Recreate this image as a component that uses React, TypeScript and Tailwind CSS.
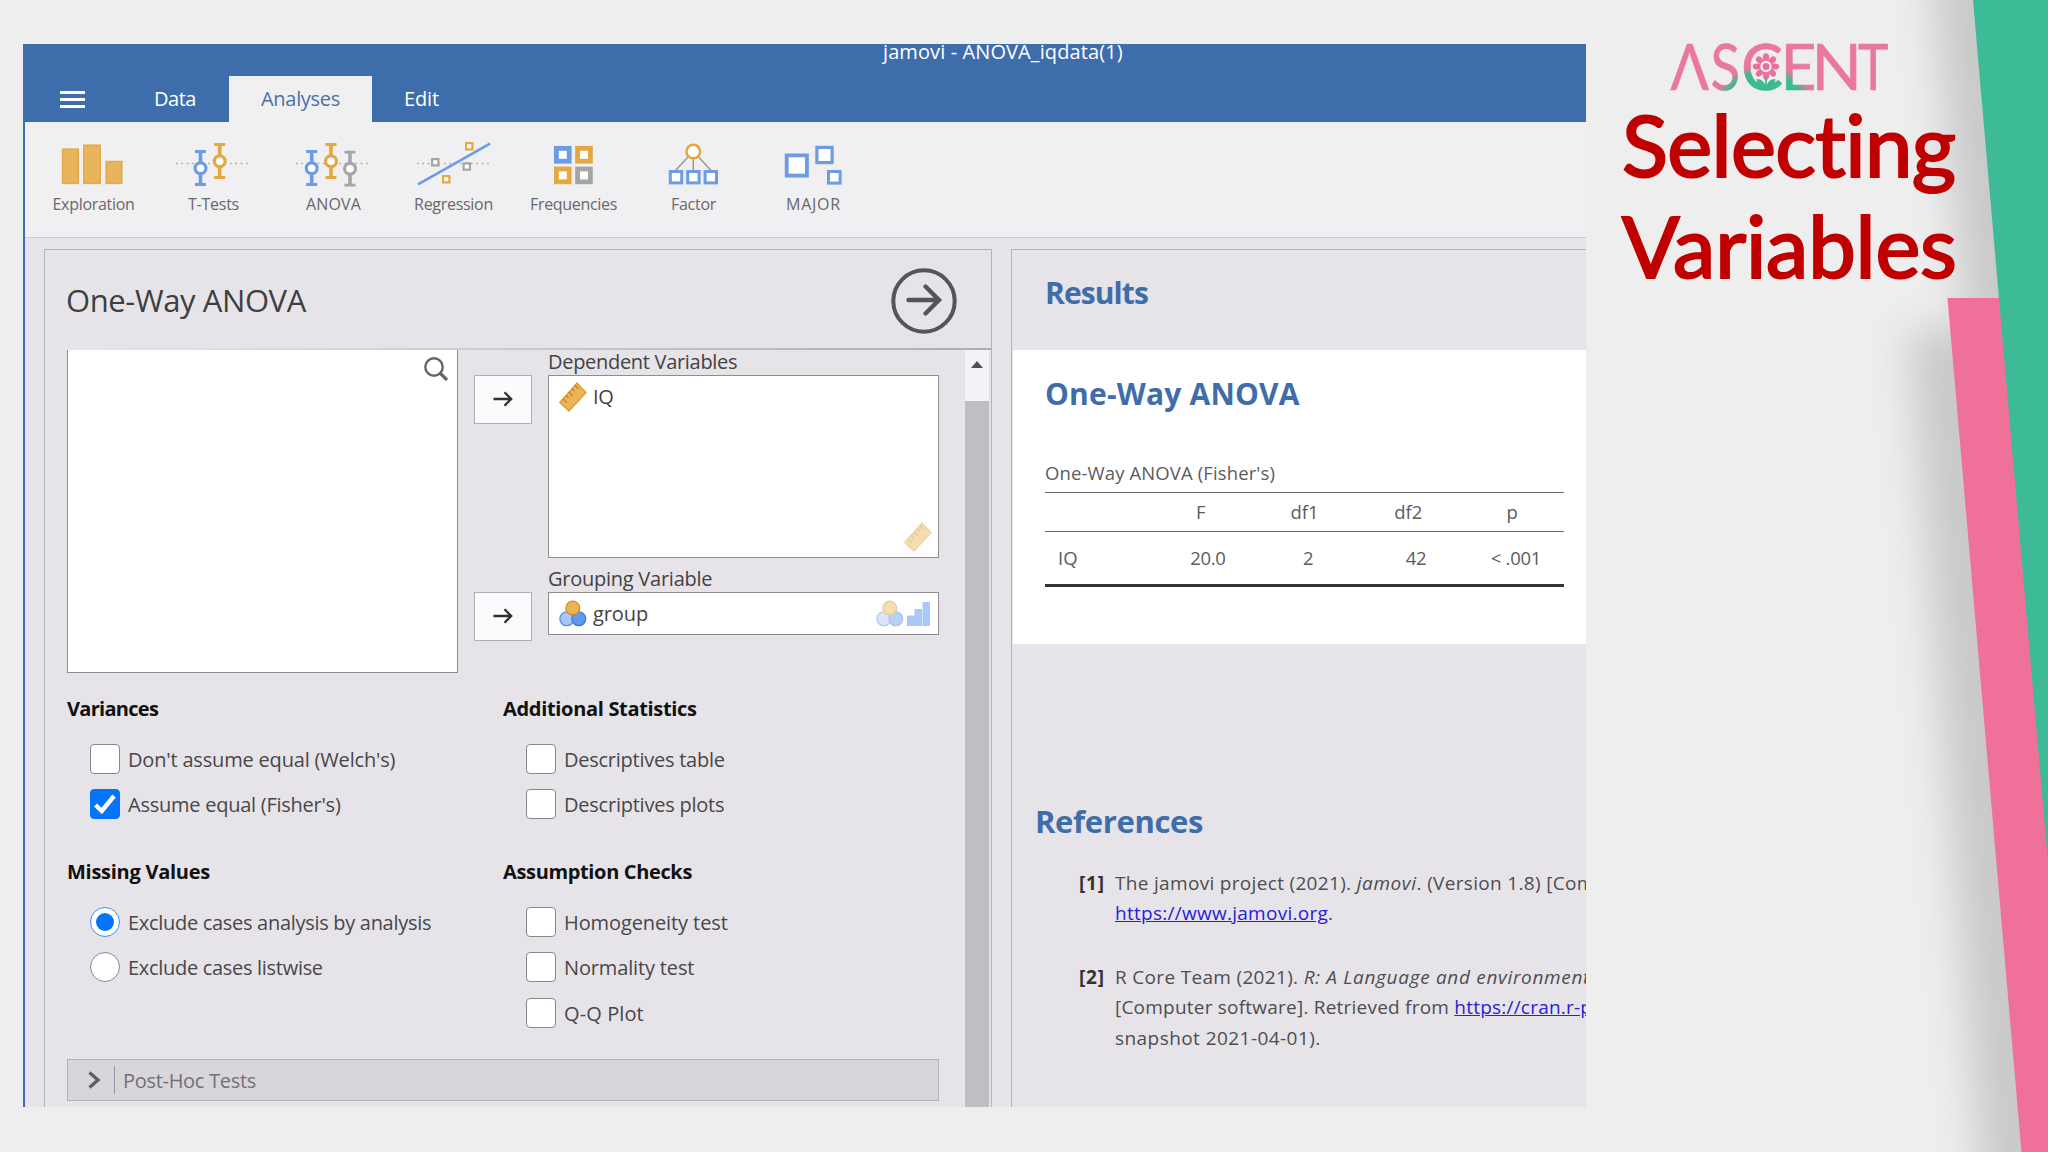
import type { ReactNode } from "react";
import clsx from "clsx";

const BLUE = "#6b9ce4";
const ORANGE = "#e3a93f";
const GRAY = "#a5a5a5";

function Dots({ from = 3, to = 76 }: { from?: number; to?: number }) {
  return <line x1={from} x2={to} y1={23.5} y2={23.5} stroke="#a9a9a9" strokeWidth={1.5} strokeDasharray="1.6 3.8" />;
}

function ErrorBar({ x, top, bottom, mid, color }: { x: number; top: number; bottom: number; mid: number; color: string }) {
  return (
    <g stroke={color} fill="none">
      <path d={`M${x} ${top}V${bottom}`} strokeWidth={3.6} />
      <path d={`M${x - 5.5} ${top}H${x + 5.5}M${x - 5.5} ${bottom}H${x + 5.5}`} strokeWidth={2.8} />
      <circle cx={x} cy={mid} r={5.4} fill="#fff" strokeWidth={3.2} />
    </g>
  );
}

function Square({ x, y, size, stroke, color }: { x: number; y: number; size: number; stroke: number; color: string }) {
  return (
    <rect
      x={x + stroke / 2}
      y={y + stroke / 2}
      width={size - stroke}
      height={size - stroke}
      fill="#fff"
      stroke={color}
      strokeWidth={stroke}
    />
  );
}

const tools: { label: string; icon: ReactNode; tracking: string }[] = [
  {
    label: "Exploration",
    tracking: "tracking-[-0.3px]",
    icon: (
      <g fill="#e8b55c" stroke="#e2aa48" strokeWidth={1.5}>
        <rect x={9.5} y={9.2} width={15.8} height={34.2} />
        <rect x={30.8} y={5.2} width={16.4} height={38.2} />
        <rect x={53.2} y={21.5} width={15.6} height={21.9} />
      </g>
    ),
  },
  {
    label: "T-Tests",
    tracking: "tracking-[-0.25px]",
    icon: (
      <>
        <Dots />
        <ErrorBar x={27.5} top={11.5} bottom={44.5} mid={28.2} color={BLUE} />
        <ErrorBar x={46.7} top={4.5} bottom={37.5} mid={21.3} color={ORANGE} />
      </>
    ),
  },
  {
    label: "ANOVA",
    tracking: "tracking-[0.15px]",
    icon: (
      <>
        <Dots />
        <ErrorBar x={18.7} top={11.5} bottom={44.5} mid={28.2} color={BLUE} />
        <ErrorBar x={38} top={4.5} bottom={37.5} mid={21.3} color={ORANGE} />
        <ErrorBar x={57} top={12.2} bottom={45.2} mid={28.8} color={GRAY} />
      </>
    ),
  },
  {
    label: "Regression",
    tracking: "tracking-[-0.3px]",
    icon: (
      <>
        <Dots from={4} to={78} />
        <path d="M5 44.3L77 3.7" stroke={BLUE} strokeWidth={2.6} />
        <Square x={18} y={18} size={8.5} stroke={2.2} color={GRAY} />
        <Square x={29} y={35} size={8.5} stroke={2.2} color={ORANGE} />
        <Square x={52} y={2} size={8.5} stroke={2.2} color={ORANGE} />
        <Square x={49.5} y={22.3} size={8.5} stroke={2.2} color={GRAY} />
      </>
    ),
  },
  {
    label: "Frequencies",
    tracking: "tracking-[-0.32px]",
    icon: (
      <>
        <Square x={21} y={6} size={17.6} stroke={4.8} color={BLUE} />
        <Square x={42.2} y={6} size={17.6} stroke={4.8} color={ORANGE} />
        <Square x={21} y={26.6} size={17.6} stroke={4.8} color={ORANGE} />
        <Square x={42.2} y={26.6} size={17.6} stroke={4.8} color={GRAY} />
      </>
    ),
  },
  {
    label: "Factor",
    tracking: "tracking-[-0.28px]",
    icon: (
      <>
        <path d="M35 17L22 31M40.3 19V31M45.6 17L58.5 31" stroke="#999" strokeWidth={1.5} fill="none" />
        <circle cx={40.3} cy={11.6} r={6.8} fill="#fff" stroke={ORANGE} strokeWidth={2.6} />
        <Square x={15.8} y={30} size={14.4} stroke={3} color={BLUE} />
        <Square x={33.2} y={30} size={14.4} stroke={3} color={BLUE} />
        <Square x={50.6} y={30} size={14.4} stroke={3} color={BLUE} />
      </>
    ),
  },
  {
    label: "MAJOR",
    tracking: "tracking-[0.75px]",
    icon: (
      <>
        <Square x={11.8} y={13.5} size={24} stroke={3.8} color={BLUE} />
        <Square x={42.3} y={5.8} size={18.4} stroke={3.2} color={BLUE} />
        <Square x={54} y={30} size={14.6} stroke={3} color={BLUE} />
      </>
    ),
  },
];

function ArrowButton({ className }: { className?: string }) {
  return (
    <button className={clsx("flex h-[49px] w-[58px] items-center justify-center border border-[#b1afb3] bg-[#fbfafc]", className)}>
      <svg viewBox="0 0 20 16" className="mt-[-2px] h-4 w-5" fill="none" stroke="#303033" strokeWidth={2.3}>
        <path d="M0.5 8H18M11.5 1.3L18.2 8L11.5 14.7" />
      </svg>
    </button>
  );
}

function Ruler({ className }: { className?: string }) {
  return (
    <svg viewBox="0 0 28 30" className={clsx("h-[30px] w-7", className)}>
      <path d="M0.8 20.5L18 1L27 10.5L10 29Z" fill="#ecb553" stroke="#dd9d33" strokeWidth={1.3} />
      <path d="M4 16.8l3.6 3.8M7 13.4l2.4 2.5M10 10l3.6 3.8M13 6.6l2.4 2.5M16 3.3l3.4 3.6" stroke="#b97f22" strokeWidth={1.1} />
    </svg>
  );
}

function Nominal({ className }: { className?: string }) {
  return (
    <svg viewBox="0 0 28 27" className={clsx("h-[27px] w-7", className)} strokeWidth={1.3}>
      <circle cx={7.8} cy={18.8} r={6.9} fill="#a9c6f5" stroke="#5c8fe0" />
      <circle cx={19.8} cy={18.8} r={6.9} fill="#619aec" stroke="#3f7bd8" />
      <circle cx={13.8} cy={8} r={6.9} fill="#ecb553" stroke="#cc8f28" />
    </svg>
  );
}

function Option({ label, kind = "check", on = false, tracking }: { label: string; kind?: "check" | "radio"; on?: boolean; tracking: string }) {
  return (
    <label className="flex h-[30px] items-center gap-2 pl-[23px]">
      <span
        className={clsx(
          "flex size-[30px] shrink-0 items-center justify-center border",
          kind === "radio" ? "rounded-full" : "rounded-[4px]",
          on && kind === "check" ? "border-[#0474fb] bg-[#0474fb]" : "bg-white",
          on && kind === "radio" && "border-[#3c8cf5]",
          !on && "border-[#88868a]",
        )}
      >
        {on && kind === "check" && (
          <svg viewBox="0 0 22 20" className="h-5 w-[22px]" fill="none" stroke="#fff" strokeWidth={4.4}>
            <path d="M1.5 11L7.8 17L20 2" />
          </svg>
        )}
        {on && kind === "radio" && <span className="size-[18px] rounded-full bg-[#0474fb]" />}
      </span>
      <span className={clsx("mt-0.5 text-[20px] leading-[30px] whitespace-nowrap text-[#48474a]", tracking)}>{label}</span>
    </label>
  );
}

function Group({ title, tracking, children, className }: { title: string; tracking: string; children: ReactNode; className?: string }) {
  return (
    <section className={className}>
      <h3 className={clsx("mb-[19px] text-[20px] leading-[32px] font-bold text-[#111]", tracking)}>{title}</h3>
      <div className="flex flex-col gap-[15.4px]">{children}</div>
    </section>
  );
}

function TitleBar() {
  return (
    <header className="flex h-[78px] flex-col bg-[#3e6dab] text-[20px] text-white">
      <div className="h-8 pl-[860px]">
        <div className="mt-[-4px] h-6 leading-6 tracking-[0.1px] whitespace-nowrap">jamovi - ANOVA_iqdata(1)</div>
      </div>
      <nav className="flex h-[46px] items-center">
        <div className="ml-[37px] flex w-[25px] flex-col gap-1">
          <span className="h-[3px] bg-white" />
          <span className="h-[3px] bg-white" />
          <span className="h-[3px] bg-white" />
        </div>
        <span className="w-[144px] pr-[33px] text-right tracking-[-0.45px]">Data</span>
        <span className="flex h-[46px] w-[143px] items-center justify-center bg-[#f1f0f1] tracking-[-0.3px] text-[#4a70a8]">Analyses</span>
        <span className="ml-8 tracking-[-0.15px]">Edit</span>
      </nav>
    </header>
  );
}

function Toolbar() {
  return (
    <div className="flex h-[116px] border-b border-[#cbcacd] bg-[#f0eff1] pl-2">
      {tools.map((t) => (
        <div key={t.label} className="flex w-[120px] flex-col items-center pt-[18px]">
          <svg viewBox="0 0 80 50" className="h-[50px] w-20">
            {t.icon}
          </svg>
          <span className={clsx("mt-[2px] pl-px text-[16px] leading-6 text-[#69686b]", t.tracking)}>{t.label}</span>
        </div>
      ))}
    </div>
  );
}

function OptionsPanel() {
  return (
    <section className="flex h-full w-[948px] flex-col border border-b-0 border-[#b5b3b7]">
      <div className="flex h-[98px] shrink-0 items-center justify-between pr-[34px] pl-[21px]">
        <h1 className="mt-[3px] text-[31px] tracking-[-0.4px] text-[#3f3e41]">One-Way ANOVA</h1>
        <svg viewBox="0 0 66 66" className="mt-[3px] size-[66px]" fill="none" stroke="#555457" strokeWidth={4} strokeLinecap="round">
          <circle cx={33} cy={33} r={30.7} />
          <path d="M17.5 32H48M34.5 18.5L48 32L34.5 45.5" strokeWidth={4.4} />
        </svg>
      </div>
      <div className="h-[2px] shrink-0 bg-linear-to-r from-[#e6e4e8] from-5% to-[#aeacb0]" />
      <div className="flex min-h-0 flex-1">
        <div className="w-[920px] shrink-0 overflow-hidden pl-[22px]">
          <div className="flex">
            <div className="flex h-[323px] w-[391px] justify-end border border-t-0 border-[#8f8d92] bg-white pt-[7px] pr-[9px]">
              <svg viewBox="0 0 24 24" className="size-6" fill="none" stroke="#666568">
                <circle cx={10} cy={10} r={8.7} strokeWidth={2.4} />
                <path d="M16 16L23 23" strokeWidth={3.2} />
              </svg>
            </div>
            <div className="ml-4 flex flex-col">
              <ArrowButton className="mt-[25px]" />
              <ArrowButton className="mt-[168px]" />
            </div>
            <div className="ml-4 w-[391px] text-[20px] text-[#434245]">
              <div className="mb-px h-6 leading-6 tracking-[-0.3px]">Dependent Variables</div>
              <div className="flex h-[183px] flex-col justify-between border border-[#8f8d92] bg-white">
                <div className="flex items-center pt-[5px] pl-[10px]">
                  <Ruler />
                  <span className="ml-[6px] leading-8 tracking-[-0.3px]">IQ</span>
                </div>
                <Ruler className="mr-[6px] mb-[5px] self-end opacity-45" />
              </div>
              <div className="h-[34px] pt-[5px] leading-8 tracking-[-0.25px]">Grouping Variable</div>
              <div className="flex h-[43px] items-center border border-[#8f8d92] bg-white pl-[10px]">
                <Nominal />
                <span className="ml-[6px] leading-8 tracking-[-0.1px]">group</span>
                <Nominal className="ml-auto opacity-45" />
                <svg viewBox="0 0 23 25" className="mr-2 ml-[3px] h-[25px] w-[23px]" fill="#a9c8f3">
                  <path d="M0 14.5H7.5V25H0ZM7.5 8H15V25H7.5ZM15.5 1H23V25H15.5Z" />
                </svg>
              </div>
            </div>
          </div>
          <div className="-ml-px grid grid-cols-[436px_436px] pt-5 pl-px">
            <Group title="Variances" tracking="tracking-[-0.7px]" className="h-[163px]">
              <Option label="Don't assume equal (Welch's)" tracking="tracking-[-0.18px]" />
              <Option label="Assume equal (Fisher's)" tracking="tracking-[-0.25px]" on />
            </Group>
            <Group title="Additional Statistics" tracking="tracking-[-0.32px]">
              <Option label="Descriptives table" tracking="tracking-[-0.25px]" />
              <Option label="Descriptives plots" tracking="tracking-[-0.23px]" />
            </Group>
            <Group title="Missing Values" tracking="tracking-[-0.27px]" className="h-[203px]">
              <Option label="Exclude cases analysis by analysis" tracking="tracking-[-0.3px]" kind="radio" on />
              <Option label="Exclude cases listwise" tracking="tracking-[-0.3px]" kind="radio" />
            </Group>
            <Group title="Assumption Checks" tracking="tracking-[-0.35px]">
              <Option label="Homogeneity test" tracking="tracking-[-0.1px]" />
              <Option label="Normality test" tracking="tracking-[-0.15px]" />
              <Option label="Q-Q Plot" tracking="tracking-[0.1px]" />
            </Group>
          </div>
          <div className="flex h-[42px] w-[872px] items-center border border-[#b4b2b6] bg-[#d8d6da] pl-[20px]">
            <svg viewBox="0 0 13 18" className="h-[18px] w-[13px]" fill="none" stroke="#5f5e62" strokeWidth={3.2}>
              <path d="M1.5 1.5L10 9L1.5 16.5" />
            </svg>
            <span className="ml-[13px] h-7 w-px bg-[#98969a]" />
            <span className="mt-0.5 ml-2 text-[20px] tracking-[-0.3px] text-[#727175]">Post-Hoc Tests</span>
          </div>
        </div>
        <div className="flex w-[24px] flex-col bg-[#c0bec2]">
          <div className="flex h-[51px] justify-center bg-[#f3f2f4] pt-[11px]">
            <svg viewBox="0 0 12 7" className="h-[7px] w-3" fill="#515054">
              <path d="M6 0L12 7H0Z" />
            </svg>
          </div>
        </div>
      </div>
    </section>
  );
}

const columns = [
  { name: "F", value: "20.0", pad: "pr-[27px]" },
  { name: "df1", value: "2", pad: "pr-[43px]" },
  { name: "df2", value: "42", pad: "pr-[34px]" },
  { name: "p", value: "< .001", pad: "pr-[23px]" },
];

function ResultsPanel() {
  return (
    <section className="ml-[19px] flex h-full min-w-0 flex-1 flex-col border-t border-l border-[#b5b3b7]">
      <h2 className="h-[100px] shrink-0 pl-[33px] text-[30px] leading-[86px] font-bold tracking-[-0.9px] text-[#3e6da9]">Results</h2>
      <div className="ml-px h-[294px] shrink-0 bg-white pr-[22px] pl-8 text-[18.5px] text-[#5c5b5e]">
        <h2 className="h-[104px] text-[30px] leading-[87px] font-bold tracking-[0.2px] text-[#3e6da9]">One-Way ANOVA</h2>
        <div className="h-[38px] leading-[38px] tracking-[0.12px]">One-Way ANOVA (Fisher's)</div>
        <div className="grid h-[40px] grid-cols-5 border-y border-[#6d6c70] leading-[37px]">
          <span />
          {columns.map((c) => (
            <span key={c.name} className="text-center">
              {c.name}
            </span>
          ))}
        </div>
        <div className="grid h-[55px] grid-cols-5 border-b-3 border-[#36363a] leading-[52px]">
          <span className="pl-[13px]">IQ</span>
          {columns.map((c) => (
            <span key={c.name} className={clsx("text-right tracking-[-0.3px]", c.pad)}>
              {c.value}
            </span>
          ))}
        </div>
      </div>
      <h2 className="mt-[156px] pl-[23px] text-[31px] leading-[42px] font-bold tracking-[-0.35px] text-[#3e6da9]">References</h2>
      <ol className="mt-[26px] flex flex-col gap-[33px] pl-[67px] text-[19px] leading-[30.4px] tracking-[0.32px] whitespace-nowrap text-[#4e4d50]">
        <li className="flex">
          <b className="w-9 shrink-0 tracking-[0.8px] text-[#333]">[1]</b>
          <p>
            The jamovi project (2021). <i className="tracking-[0.6px]">jamovi</i>. (Version 1.8) [Computer Software].
            <br />
            <a className="tracking-[0.27px] text-[#2a20d8] underline">https://www.jamovi.org</a>.
          </p>
        </li>
        <li className="flex">
          <b className="w-9 shrink-0 tracking-[0.8px] text-[#333]">[2]</b>
          <p>
            R Core Team (2021). <i className="tracking-[0.68px]">R: A Language and environment for statistical computing</i>.
            <br />
            <span className="tracking-[0.22px]">
              [Computer software]. Retrieved from <a className="text-[#2a20d8] underline">https://cran.r-project.org</a>.
            </span>
            <br />
            <span className="tracking-[0.44px]">snapshot 2021-04-01).</span>
          </p>
        </li>
      </ol>
    </section>
  );
}

const petals = [0, 45, 90, 135, 180, 225, 270, 315];
const logoLetters = [
  { ch: "Λ", x: 0.5, w: 38.5 },
  { ch: "S", x: 40.5, w: 29.5 },
  { ch: "C", x: 71, w: 42 },
  { ch: "E", x: 110.5, w: 36 },
  { ch: "N", x: 141.5, w: 50.5 },
  { ch: "T", x: 188, w: 30.5 },
];

function Logo() {
  return (
    <svg viewBox="0 0 220 52" className="ml-[84px] h-[52px] w-[220px] overflow-visible">
      <defs>
        <radialGradient
          id="ascent"
          gradientUnits="userSpaceOnUse"
          cx={94}
          cy={66}
          r={48}
          gradientTransform="translate(94 0) scale(1.15 1) translate(-94 0)"
        >
          <stop offset="0.76" stopColor="#3dba92" />
          <stop offset="0.94" stopColor="#e9779f" />
        </radialGradient>
      </defs>
      <g fill="url(#ascent)" stroke="url(#ascent)" strokeWidth={0.6} fontSize={63} className="font-[Lato,sans-serif]">
        {logoLetters.map((l) => (
          <text key={l.ch} x={l.x} y={46} textLength={l.w} lengthAdjust="spacingAndGlyphs">
            {l.ch}
          </text>
        ))}
      </g>
      <g fill="#e9709c">
        {petals.map((a) => (
          <ellipse key={a} cx={96} cy={13.5} rx={3.1} ry={4.2} transform={`rotate(${a} 96 22.5)`} />
        ))}
        <circle cx={96} cy={22.5} r={7} />
      </g>
      <circle cx={96} cy={22.5} r={4.6} fill="none" stroke="#f3f1f2" strokeWidth={2.2} />
      <path d="M96 34V45" stroke="#3dba92" strokeWidth={1.8} />
      <path d="M95.3 43Q87 43 86.5 35Q94.5 35 95.3 43ZM96.7 43Q105 43 105.5 35Q97.5 35 96.7 43Z" fill="#3dba92" />
    </svg>
  );
}

function Ribbons() {
  return (
    <svg viewBox="0 0 248 1152" className="pointer-events-none absolute top-0 right-0 h-[1152px] w-[248px]">
      <defs>
        <filter id="soft" filterUnits="userSpaceOnUse" x={-60} y={-100} width={420} height={1400}>
          <feGaussianBlur stdDeviation={21} />
        </filter>
      </defs>
      <g fill="#c9c9c9" filter="url(#soft)">
        <path d="M126 -80L166 330H300V-80Z" />
        <path d="M108 330L186 1240H340V330Z" />
      </g>
      <path d="M147.5 298H248V1152H221.5Z" fill="#ef7099" />
      <path d="M173 0H248V862Z" fill="#3dbb97" />
    </svg>
  );
}

export default function App() {
  return (
    <div className="relative flex h-[1152px] w-[2048px] overflow-hidden bg-[#efeeef] pt-11 pl-[23px] font-['Open_Sans',sans-serif]">
      <Ribbons />
      <main className="relative flex h-[1063px] w-[1563px] shrink-0 flex-col overflow-hidden bg-[#e6e4e8]">
        <TitleBar />
        <div className="flex min-h-0 flex-1 flex-col border-l-2 border-[#3e6dab]">
          <Toolbar />
          <div className="flex min-h-0 flex-1 pt-[11px] pl-[19px]">
            <OptionsPanel />
            <ResultsPanel />
          </div>
        </div>
      </main>
      <aside className="relative flex-1">
        <Logo />
        <h1 className="mt-[-2px] ml-[36px] font-[Lato,sans-serif] text-[85px] leading-[101px] text-[#c00000] [-webkit-text-stroke:2.2px_#c00000]">
          <div className="tracking-[-0.6px]">Selecting</div>
          <div className="tracking-[-0.2px]">Variables</div>
        </h1>
      </aside>
    </div>
  );
}
